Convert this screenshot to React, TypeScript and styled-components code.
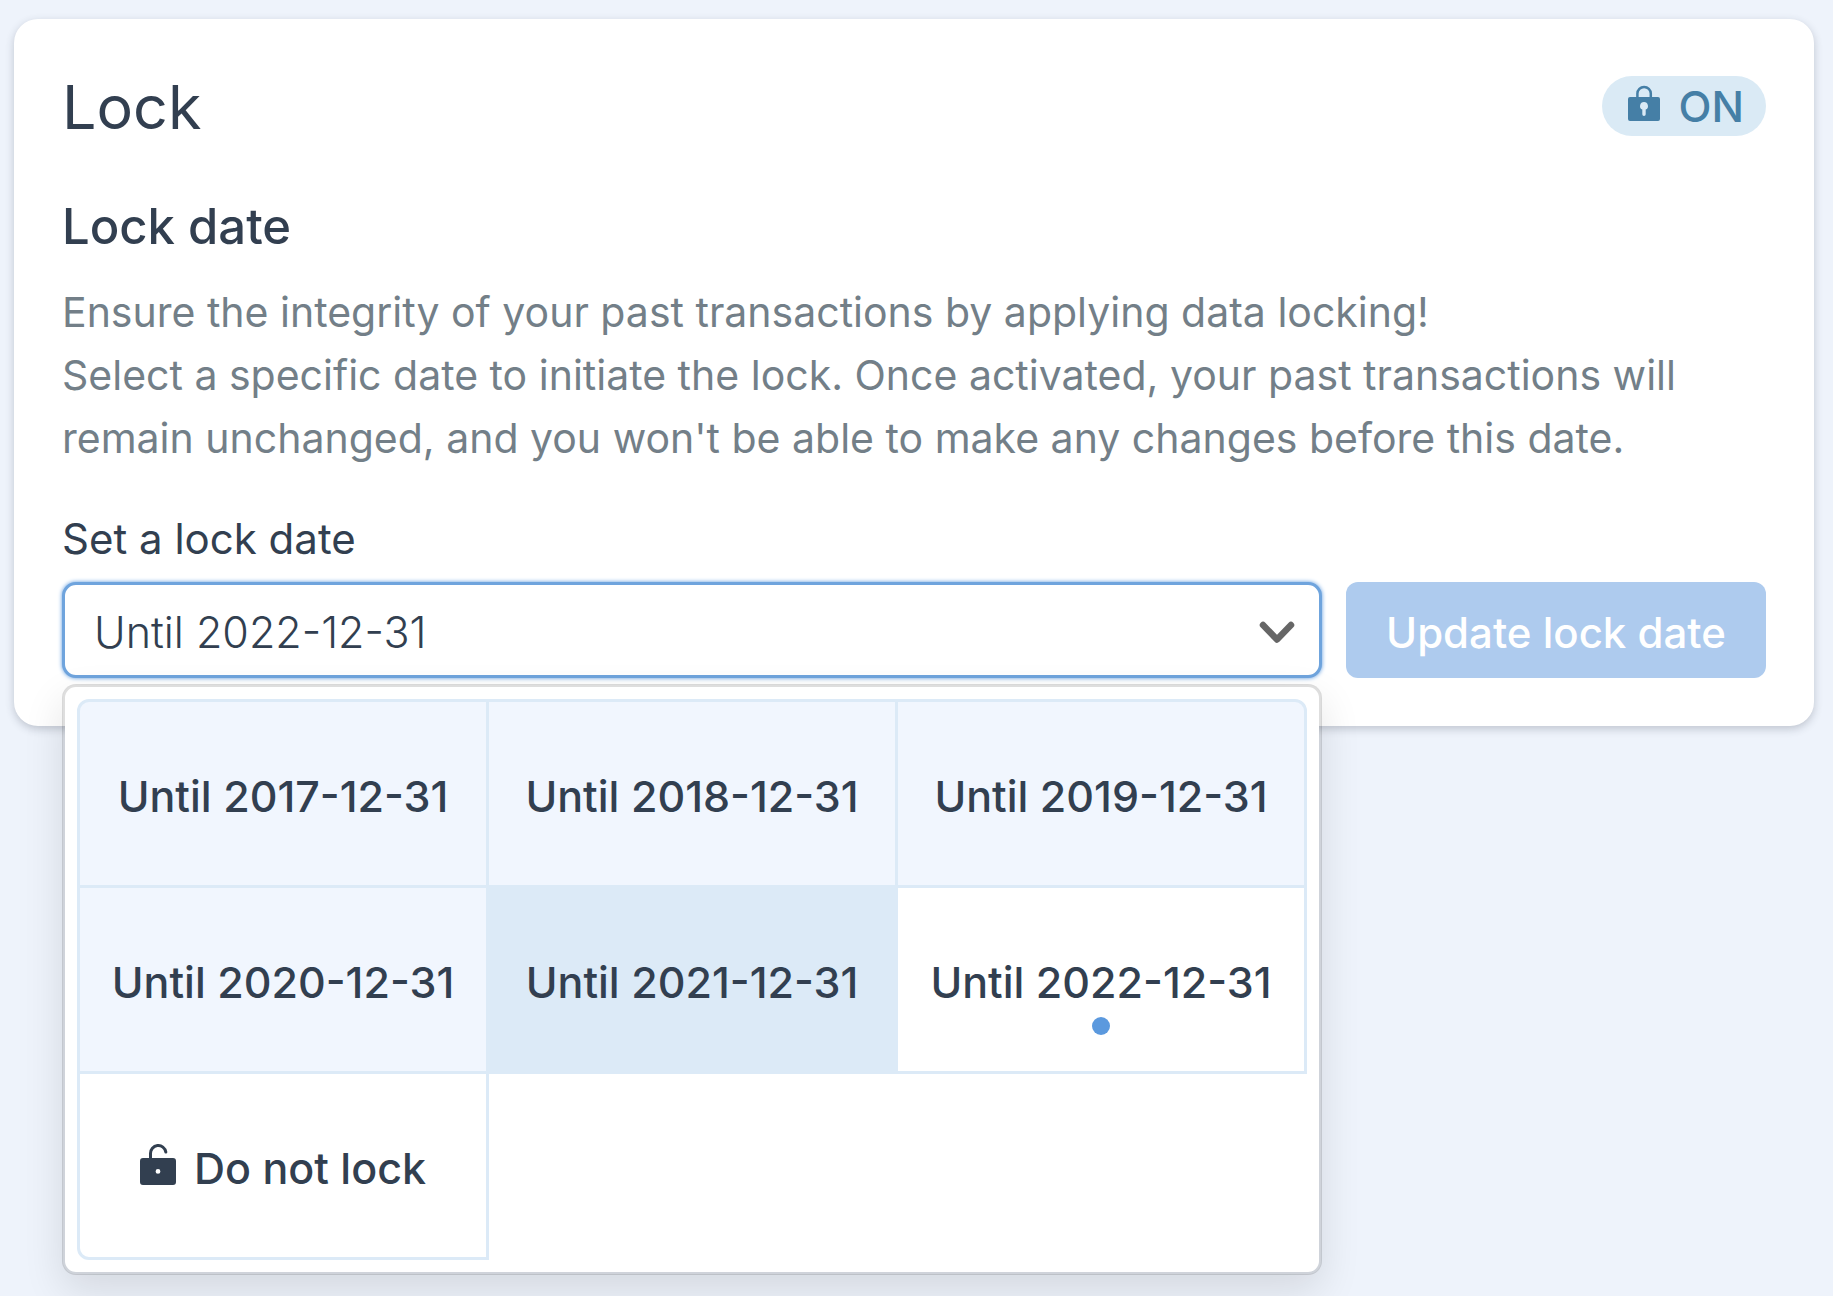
import React, { useState } from "react";
import styled, { createGlobalStyle, css } from "styled-components";

const ink = "#323f50";
const line = "#dceaf7";

const GlobalStyle = createGlobalStyle`
  *, *::before, *::after { box-sizing: border-box; }
  html { height: 100%; }
  body {
    margin: 0;
    min-height: 100%;
    overflow: hidden;
    background: #eef3fb;
    color: ${ink};
    font-family: Inter, "Liberation Sans", sans-serif;
  }
  button, select { font-family: inherit; }
`;

const Page = styled.main`
  padding: 19px 19px 0 14px;
`;

const Card = styled.section`
  padding: 48px;
  background: #fff;
  border-radius: 24px;
  box-shadow: 0 3px 9px rgba(40, 50, 70, 0.24);
`;

const CardHeader = styled.header`
  display: flex;
  align-items: center;
  justify-content: space-between;
  height: 78px;
`;

const Title = styled.h1`
  margin: 0;
  padding-top: 2px;
  font-size: 61px;
  line-height: 78px;
  font-weight: 400;
`;

const StatusBadge = styled.span`
  display: flex;
  align-items: center;
  gap: 19px;
  height: 60px;
  padding: 0 22px 0 26px;
  border-radius: 30px;
  background: #daeaf5;
  color: #457fa6;
  font-size: 43px;
  line-height: 60px;
  font-weight: 500;

  svg { margin-bottom: 6px; }
`;

const Subtitle = styled.h2`
  margin: 52px 0 24px;
  font-size: 49px;
  line-height: 60px;
  font-weight: 500;
`;

const Description = styled.p`
  margin: 0;
  color: #737f88;
  font-size: 41px;
  line-height: 63px;
  font-weight: 400;
`;

const Label = styled.label`
  display: block;
  margin: 37px 0 12px;
  font-size: 42px;
  line-height: 63px;
  font-weight: 400;
`;

const FieldRow = styled.div`
  display: flex;
  gap: 24px;
`;

const SelectBox = styled.div`
  position: relative;
  flex: 1;
`;

const Select = styled.select`
  display: block;
  width: 100%;
  height: 96px;
  padding: 4px 84px 0 29px;
  appearance: none;
  border: 3px solid #6fa4dd;
  border-radius: 14px;
  outline: none;
  background: #fff;
  color: ${ink};
  font-size: 43px;
  font-weight: 300;
  box-shadow: 0 0 4px #5b99de;
`;

const Chevron = styled.svg`
  position: absolute;
  top: 37px;
  right: 26px;
  pointer-events: none;
`;

const UpdateButton = styled.button`
  height: 96px;
  width: 420px;
  padding: 4px 0 0;
  border: 0;
  border-radius: 12px;
  background: #aecbee;
  color: #fff;
  font-size: 42px;
  font-weight: 500;
`;

const Menu = styled.div`
  position: absolute;
  top: 102px;
  left: 0;
  right: 0;
  display: grid;
  grid-template-columns: repeat(3, 1fr);
  grid-auto-rows: 186px;
  padding: 12px 15px 15px 12px;
  border: 3px solid rgba(0, 0, 0, 0.13);
  border-radius: 14px;
  background: #fff;
  background-clip: padding-box;
  box-shadow: 0 16px 40px rgba(0, 0, 0, 0.11);
`;

type Tone = "past" | "active" | "plain";

const tones: Record<Tone, string> = {
  past: "#f1f6fe",
  active: line,
  plain: "#fff",
};

const Option = styled.button<{ $tone: Tone; $corner?: string }>`
  position: relative;
  display: flex;
  align-items: center;
  justify-content: center;
  gap: 18px;
  margin: 0 -3px -3px 0;
  padding: 4px 0 0;
  border: 3px solid ${line};
  border-radius: ${(p) => p.$corner ?? "0"};
  background: ${(p) => tones[p.$tone]};
  color: ${ink};
  font-size: 43px;
  font-weight: 500;
  white-space: nowrap;

  svg { margin-bottom: 6px; }

  ${(p) =>
    p["aria-selected"] &&
    css`
      &::after {
        content: "";
        position: absolute;
        left: 50%;
        bottom: 36px;
        width: 18px;
        height: 18px;
        margin-left: -9px;
        border-radius: 50%;
        background: #5b99de;
      }
    `}
`;

const LockIcon = () => (
  <svg width="32" height="36" viewBox="0 0 32 36" aria-hidden="true">
    <path d="M9.4 14V8.600a6.700 6.700 0 0 1 13.400 0V14" fill="none" stroke="currentColor" strokeWidth="2.500" />
    <path
      fill="currentColor"
      fillRule="evenodd"
      d="M2 12h28a2 2 0 0 1 2 2v20a2 2 0 0 1-2 2H2a2 2 0 0 1-2-2V14a2 2 0 0 1 2-2zM16 17a4 4 0 0 0-1.700 7.600v4.600a1.700 1.700 0 0 0 3.400 0v-4.600A4 4 0 0 0 16 17z"
    />
  </svg>
);

const UnlockIcon = () => (
  <svg width="36" height="41" viewBox="0 0 36 41" aria-hidden="true">
    <path d="M10.500 16V9.500a7.700 7.700 0 0 1 15.300-1.500" fill="none" stroke="currentColor" strokeWidth="3" strokeLinecap="round" />
    <path
      fill="currentColor"
      fillRule="evenodd"
      d="M3 14h30a3 3 0 0 1 3 3v21a3 3 0 0 1-3 3H3a3 3 0 0 1-3-3V17a3 3 0 0 1 3-3zM18 25a2.400 2.400 0 1 0 0 4.800 2.400 2.400 0 0 0 0-4.800z"
    />
  </svg>
);

interface Choice {
  label: string;
  tone: Tone;
  corner?: string;
  unlocks?: boolean;
}

const choices: Choice[] = [
  { label: "Until 2017-12-31", tone: "past", corner: "12px 0 0 0" },
  { label: "Until 2018-12-31", tone: "past" },
  { label: "Until 2019-12-31", tone: "past", corner: "0 12px 0 0" },
  { label: "Until 2020-12-31", tone: "past" },
  { label: "Until 2021-12-31", tone: "active" },
  { label: "Until 2022-12-31", tone: "plain" },
  { label: "Do not lock", tone: "plain", corner: "0 0 0 12px", unlocks: true },
];

export default function App() {
  const [value, setValue] = useState("Until 2022-12-31");
  const [open, setOpen] = useState(true);

  return (
    <>
      <GlobalStyle />
      <Page>
        <Card>
          <CardHeader>
            <Title>Lock</Title>
            <StatusBadge>
              <LockIcon />
              ON
            </StatusBadge>
          </CardHeader>
          <Subtitle>Lock date</Subtitle>
          <Description>
            Ensure the integrity of your past transactions by applying data locking!
            <br />
            Select a specific date to initiate the lock. Once activated, your past transactions will
            remain unchanged, and you won't be able to make any changes before this date.
          </Description>
          <Label htmlFor="lock-date">Set a lock date</Label>
          <FieldRow>
            <SelectBox>
              <Select
                id="lock-date"
                value={value}
                onChange={(e) => setValue(e.target.value)}
                onMouseDown={(e) => {
                  e.preventDefault();
                  setOpen(!open);
                }}
              >
                {choices.map((c) => (
                  <option key={c.label}>{c.label}</option>
                ))}
              </Select>
              <Chevron width="38" height="26" viewBox="0 0 38 26" aria-hidden="true">
                <path d="M5 6l14 14.500L33 6" fill="none" stroke="#666" strokeWidth="6.500" strokeLinecap="round" strokeLinejoin="round" />
              </Chevron>
              {open && (
                <Menu role="listbox" aria-label="Lock date">
                  {choices.map((c) => (
                    <Option
                      key={c.label}
                      type="button"
                      role="option"
                      aria-selected={c.label === value}
                      $tone={c.tone}
                      $corner={c.corner}
                      onClick={() => {
                        setValue(c.label);
                        setOpen(false);
                      }}
                    >
                      {c.unlocks && <UnlockIcon />}
                      {c.label}
                    </Option>
                  ))}
                </Menu>
              )}
            </SelectBox>
            <UpdateButton type="button">Update lock date</UpdateButton>
          </FieldRow>
        </Card>
      </Page>
    </>
  );
}
